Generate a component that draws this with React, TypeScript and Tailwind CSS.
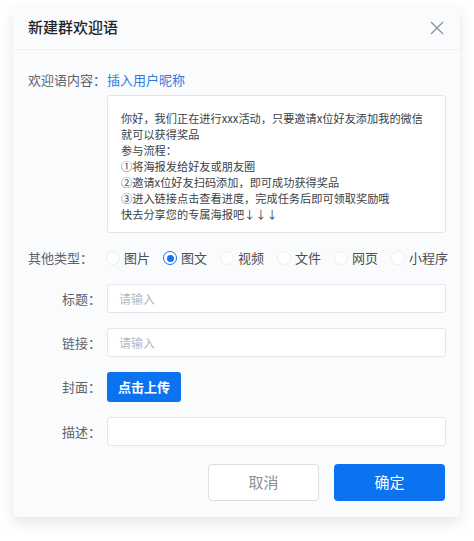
import React from 'react'

const font = { fontFamily: '"Noto Sans CJK SC", "Noto Sans", sans-serif' }

const types = ['图片', '图文', '视频', '文件', '网页', '小程序']

const lines = [
    '你好，我们正在进行xxx活动，只要邀请x位好友添加我的微信',
    '就可以获得奖品',
    '参与流程：',
    '①将海报发给好友或朋友圈',
    '②邀请x位好友扫码添加，即可成功获得奖品',
    '③进入链接点击查看进度，完成任务后即可领取奖励哦',
    '快去分享您的专属海报吧↓↓↓',
]

const Field: React.FC<{ label: string; children: React.ReactNode }> = ({ label, children }) => (
    <div className="flex items-center">
        <span className="w-[79px] shrink-0 pr-[6px] text-right text-[13px] text-[#5f636a]">{label}</span>
        {children}
    </div>
)

const Input: React.FC<{ placeholder?: string }> = ({ placeholder }) => (
    <div className="flex h-[29px] w-[339px] items-center rounded-[3px] border border-[#e2e5ea] bg-white px-[11px] text-[12px] text-[#b3b8bf]">
        {placeholder}
    </div>
)

export default function App() {
    return (
        <div className="h-[541px] w-[474px] bg-white px-[13px] pt-[6px]" style={font}>
            <div className="w-[447px] rounded-[5px] bg-[#fafbfd] shadow-[0_6px_14px_rgba(0,0,0,0.10)]">
                {/* header */}
                <div className="flex h-[44px] items-center justify-between border-b border-[#eef0f3] pl-[15px] pr-[16px]">
                    <span className="text-[15px] font-medium text-[#1f2329]">新建群欢迎语</span>
                    <svg width="14" height="14" viewBox="0 0 14 14" fill="none" stroke="#8a8f96" strokeWidth="1.2">
                        <path d="M1 1 L13 13 M13 1 L1 13" />
                    </svg>
                </div>

                <div className="flex flex-col pb-[16px] pl-[15px] pr-[14px] pt-[19px]">
                    {/* welcome content */}
                    <div className="flex h-[22px] items-center text-[13px]">
                        <span className="w-[79px] text-[#5f636a]">欢迎语内容：</span>
                        <span className="text-[#2f7ce0]">插入用户昵称</span>
                    </div>
                    <div className="ml-[79px] mt-[4px] h-[138px] w-[339px] rounded-[3px] border border-[#e2e5ea] bg-white pl-[13px] pt-[14px] text-[11.2px] leading-[16px] text-[#3b3f45]">
                        {lines.map((l) => (
                            <div key={l}>{l}</div>
                        ))}
                    </div>

                    {/* types */}
                    <div className="mt-[15px] flex h-[20px] items-center text-[13px]">
                        <span className="w-[79px] shrink-0 text-[#5f636a]">其他类型：</span>
                        <div className="-ml-[1px] flex items-center whitespace-nowrap">
                            {types.map((t, i) => (
                                <div key={t} className={`flex shrink-0 items-center gap-[4px] ${i === 0 ? '' : 'ml-[13px]'}`}>
                                    {i === 1 ? (
                                        <span className="flex h-[14px] w-[14px] items-center justify-center rounded-full border border-[#1672ec] bg-white">
                                            <span className="h-[7px] w-[7px] rounded-full bg-[#1672ec]" />
                                        </span>
                                    ) : (
                                        <span className="h-[14px] w-[14px] rounded-full border border-[#eceef1] bg-white" />
                                    )}
                                    <span className="text-[#4a4e55]">{t}</span>
                                </div>
                            ))}
                        </div>
                    </div>

                    <div className="mt-[16px] flex flex-col gap-[15px]">
                        <Field label="标题：">
                            <Input placeholder="请输入" />
                        </Field>
                        <Field label="链接：">
                            <Input placeholder="请输入" />
                        </Field>
                        <Field label="封面：">
                            <button className="h-[30px] w-[74px] rounded-[3px] bg-[#0b72f0] text-[13px] font-bold text-white">
                                点击上传
                            </button>
                        </Field>
                        <Field label="描述：">
                            <Input />
                        </Field>
                    </div>

                    {/* footer */}
                    <div className="mt-[18px] flex justify-end gap-[15px] pr-[1px]">
                        <button className="h-[37px] w-[111px] rounded-[4px] border border-[#dcdfe4] bg-white text-[15px] text-[#8a8f96]">
                            取消
                        </button>
                        <button className="h-[37px] w-[111px] rounded-[4px] bg-[#0b72f0] text-[15px] text-white">
                            确定
                        </button>
                    </div>
                </div>
            </div>
        </div>
    )
}
